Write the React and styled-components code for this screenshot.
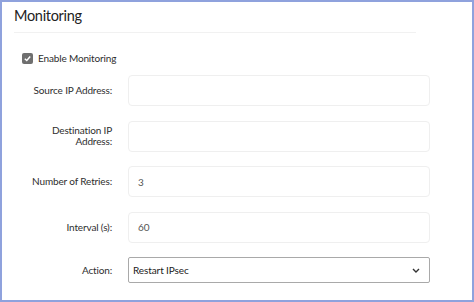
import React from "react";
import styled, { createGlobalStyle } from "styled-components";

const GlobalStyle = createGlobalStyle`
  html, body {
    margin: 0;
    padding: 0;
    background: #fff;
  }
  * {
    box-sizing: border-box;
  }
`;

const Frame = styled.div`
  width: 474px;
  height: 302px;
  border: 2px solid #8fa2dd;
  background: #fff;
  font-family: Lato, "Noto Sans", sans-serif;
  color: #333;
  overflow: hidden;
`;

const Title = styled.div`
  font-size: 14.5px;
  letter-spacing: -0.3px;
  color: #222;
  margin: 4px 0 0 12px;
  width: 402px;
  padding-bottom: 6px;
  border-bottom: 1px solid #f1f1f1;
  line-height: 20px;
`;

const CheckRow = styled.label`
  display: flex;
  align-items: center;
  gap: 5px;
  margin: 19px 0 0 20px;
  font-size: 10px;
  letter-spacing: -0.15px;
  color: #2e2e2e;
`;

const Check = styled.span`
  width: 11px;
  height: 11px;
  border-radius: 2px;
  background: #6f6f6f;
  display: flex;
  align-items: center;
  justify-content: center;
`;

const Form = styled.div`
  display: grid;
  grid-template-columns: 110px 302px;
  column-gap: 16px;
  row-gap: 14.5px;
  margin-top: 11px;
  align-items: center;
`;

const Label = styled.div`
  text-align: right;
  font-size: 10px;
  letter-spacing: -0.15px;
  line-height: 11px;
  color: #2e2e2e;
  padding-left: 22px;
`;

const Field = styled.div`
  height: 31px;
  border: 1px solid #efefef;
  border-radius: 4px;
  display: flex;
  align-items: center;
  padding-left: 9px;
  font-size: 10px;
  color: #555;
`;

const Select = styled.div`
  height: 26px;
  border: 1px solid #a9a9a9;
  border-radius: 2px;
  display: flex;
  align-items: center;
  justify-content: space-between;
  padding: 0 9px 0 4px;
  font-size: 10px;
  letter-spacing: -0.1px;
  color: #222;
`;

const rows = [
  { label: "Source IP Address:", value: "" },
  { label: "Destination IP Address:", value: "" },
  { label: "Number of Retries:", value: "3" },
  { label: "Interval (s):", value: "60" },
];

export default function App() {
  return (
    <>
      <GlobalStyle />
      <Frame>
        <Title>Monitoring</Title>
        <CheckRow>
          <Check>
            <svg width="9" height="9" viewBox="0 0 10 10">
              <path d="M2 5.2 L4.2 7.3 L8 2.8" stroke="#fff" strokeWidth="1.6" fill="none" />
            </svg>
          </Check>
          Enable Monitoring
        </CheckRow>
        <Form>
          {rows.map((r) => (
            <React.Fragment key={r.label}>
              <Label>{r.label}</Label>
              <Field>{r.value}</Field>
            </React.Fragment>
          ))}
          <Label>Action:</Label>
          <Select>
            Restart IPsec
            <svg width="8" height="5" viewBox="0 0 8 5">
              <path d="M1 1 L4 4 L7 1" stroke="#333" strokeWidth="1.4" fill="none" />
            </svg>
          </Select>
        </Form>
      </Frame>
    </>
  );
}
